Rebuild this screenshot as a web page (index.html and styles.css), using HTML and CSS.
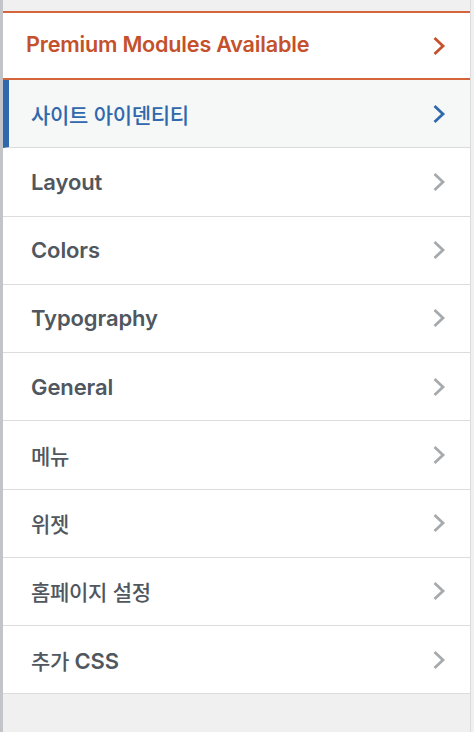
FILE: index.html
```html
<!DOCTYPE html>
<html lang="ko">
<head>
<meta charset="utf-8">
<link rel="stylesheet" href="styles.css">
</head>
<body>
<div class="frame">
  <div class="edge"></div>
  <div class="panel">
    <ul class="sections">
      <li class="row premium"><span class="label">Premium Modules Available</span><svg class="chev" viewBox="0 0 14 20"><path d="M2.5 2 L11 10 L2.5 18"/></svg></li>
      <li class="row active"><span class="label ko">사이트 아이덴티티</span><svg class="chev" viewBox="0 0 14 20"><path d="M2.5 2 L11 10 L2.5 18"/></svg></li>
      <li class="row"><span class="label">Layout</span><svg class="chev" viewBox="0 0 14 20"><path d="M2.5 2 L11 10 L2.5 18"/></svg></li>
      <li class="row"><span class="label">Colors</span><svg class="chev" viewBox="0 0 14 20"><path d="M2.5 2 L11 10 L2.5 18"/></svg></li>
      <li class="row"><span class="label">Typography</span><svg class="chev" viewBox="0 0 14 20"><path d="M2.5 2 L11 10 L2.5 18"/></svg></li>
      <li class="row"><span class="label">General</span><svg class="chev" viewBox="0 0 14 20"><path d="M2.5 2 L11 10 L2.5 18"/></svg></li>
      <li class="row"><span class="label ko">메뉴</span><svg class="chev" viewBox="0 0 14 20"><path d="M2.5 2 L11 10 L2.5 18"/></svg></li>
      <li class="row"><span class="label ko">위젯</span><svg class="chev" viewBox="0 0 14 20"><path d="M2.5 2 L11 10 L2.5 18"/></svg></li>
      <li class="row"><span class="label ko">홈페이지 설정</span><svg class="chev" viewBox="0 0 14 20"><path d="M2.5 2 L11 10 L2.5 18"/></svg></li>
      <li class="row"><span class="label"><span class="ko">추가</span> CSS</span><svg class="chev" viewBox="0 0 14 20"><path d="M2.5 2 L11 10 L2.5 18"/></svg></li>
    </ul>
  </div>
  <div class="outside"></div>
</div>
</body>
</html>
```
FILE: styles.css
```css
html, body {
  margin: 0;
  padding: 0;
  height: 100%;
}
body {
  background: #f0f0f1;
  font-family: Inter, "Noto Sans CJK KR", sans-serif;
  overflow: hidden;
}
.frame {
  display: flex;
  height: 732px;
}
.edge {
  width: 3px;
  background: #c3c4c7;
  flex: none;
}
.panel {
  width: 467px;
  flex: none;
  background: #f0f0f1;
  border-right: 1px solid #dcdcde;
  padding-top: 11px;
}
.outside {
  flex: 1;
  background: #f0f0f1;
}
.sections {
  list-style: none;
  margin: 0;
  padding: 0;
}
.row {
  display: flex;
  align-items: center;
  justify-content: space-between;
  box-sizing: border-box;
  height: 68.25px;
  border-bottom: 1px solid #dcdcde;
  background: #fff;
  padding: 0 24px 0 28px;
  color: #50575e;
  font-size: 22px;
  font-weight: 600;
}
.label {
  letter-spacing: -0.1px;
}
.ko {
  font-family: "Noto Sans CJK KR", sans-serif;
  font-size: 21px;
  font-weight: 500;
  letter-spacing: -0.3px;
}
.chev {
  width: 14px;
  height: 20px;
  fill: none;
  stroke: #a7aaad;
  stroke-width: 2.8;
}
.premium {
  height: 69px;
  border-top: 2px solid #d4643c;
  border-bottom: 2px solid #d4643c;
  color: #c4512b;
  padding: 0 24px 0 23px;
}
.premium .label {
  font-size: 21.6px;
  letter-spacing: -0.2px;
  padding-bottom: 3px;
}
.premium .chev {
  stroke: #c4512b;
}
.active {
  background: #f6f7f7;
  color: #2f68ac;
  border-left: 6px solid #2f68ac;
  padding-left: 22px;
}
.active .chev {
  stroke: #2f68ac;
}
```
